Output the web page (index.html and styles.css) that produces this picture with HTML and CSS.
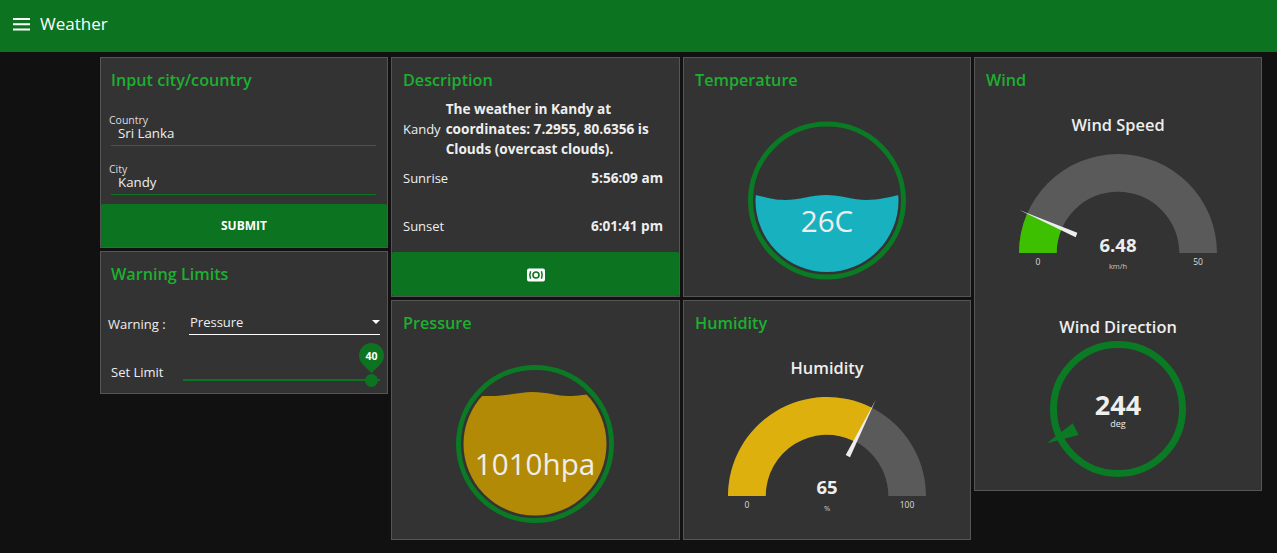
FILE: index.html
```html
<!DOCTYPE html>
<html lang="en">
<head>
    <meta charset="UTF-8">
    <meta name="viewport" content="width=device-width, initial-scale=1.0">
    <title>Weather</title>
    <link rel="stylesheet" href="styles.css">
</head>
<body>
    <header class="toolbar">
        <svg class="menu-icon" viewBox="0 0 18 14">
            <path d="M0 2h17M0 7.2h17M0 12.5h17" stroke="#fff" stroke-width="2" fill="none"/>
        </svg>
        <span class="toolbar-title">Weather</span>
    </header>

    <main class="board">
        <div class="column">
            <section class="card card-input">
                <h3 class="card-title">Input city/country</h3>
                <div class="field">
                    <label class="field-label">Country</label>
                    <div class="field-value">Sri Lanka</div>
                </div>
                <div class="field field-active">
                    <label class="field-label">City</label>
                    <div class="field-value">Kandy</div>
                </div>
                <button class="action-button">SUBMIT</button>
            </section>

            <section class="card card-limits">
                <h3 class="card-title">Warning Limits</h3>
                <div class="warning-row">
                    <span class="warning-label">Warning :</span>
                    <div class="select">
                        <span>Pressure</span>
                        <span class="select-caret"></span>
                    </div>
                </div>
                <div class="slider-row">
                    <span class="slider-label">Set Limit</span>
                    <div class="slider">
                        <div class="slider-pin"><span>40</span></div>
                        <div class="slider-thumb"></div>
                    </div>
                </div>
            </section>
        </div>

        <div class="column column-wide">
            <section class="card card-half">
                <h3 class="card-title">Description</h3>
                <div class="desc-row">
                    <span>Kandy</span>
                    <strong class="desc-text">The weather in Kandy at coordinates: 7.2955, 80.6356 is Clouds (overcast clouds).</strong>
                </div>
                <div class="time-row">
                    <span>Sunrise</span>
                    <strong>5:56:09 am</strong>
                </div>
                <div class="time-row time-row-last">
                    <span>Sunset</span>
                    <strong>6:01:41 pm</strong>
                </div>
                <button class="action-button action-icon">
                    <svg viewBox="0 0 18 14" width="18" height="14">
                        <rect x="0" y="0.5" width="18" height="13" rx="2" fill="#fff"/>
                        <circle cx="9" cy="7" r="3" fill="none" stroke="#0c7420" stroke-width="1.6"/>
                        <path d="M3.6 3.2Q2 7 3.6 10.8M14.4 3.2Q16 7 14.4 10.8" fill="none" stroke="#0c7420" stroke-width="1.5"/>
                    </svg>
                </button>
            </section>

            <section class="card card-half">
                <h3 class="card-title">Pressure</h3>
                <svg class="gauge" viewBox="0 0 286 194" height="194">
                    <clipPath id="pressure-clip"><circle cx="142.5" cy="99" r="71.5"/></clipPath>
                    <circle cx="142.5" cy="99" r="76.5" class="ring"/>
                    <path clip-path="url(#pressure-clip)" fill="#b38a05" d="M60 47C78 51 90 51 98 51C115 51 128 47 140 47C155 47 165 51 175 51C183 51 192 50 226 45V180H60Z"/>
                    <text x="142.5" y="130" class="level-text">1010hpa</text>
                </svg>
            </section>
        </div>

        <div class="column">
            <section class="card card-half">
                <h3 class="card-title">Temperature</h3>
                <svg class="gauge" viewBox="0 0 286 194" height="194">
                    <clipPath id="temp-clip"><circle cx="143" cy="98.5" r="71.5"/></clipPath>
                    <circle cx="143" cy="98.5" r="76.5" class="ring"/>
                    <path clip-path="url(#temp-clip)" fill="#17b1bf" d="M71 93C85 96 90 98 101 98C115 98 128 93 142 93C156 93 170 98 182 98C195 98 205 95 215 93V180H71Z"/>
                    <text x="143" y="130" class="level-text">26C</text>
                </svg>
            </section>

            <section class="card card-half">
                <h3 class="card-title">Humidity</h3>
                <svg class="gauge" viewBox="0 0 286 194" height="194">
                    <text x="143" y="28.5" class="gauge-title">Humidity</text>
                    <path class="arc-track" d="M44 151A99 99 0 0 1 242 151H204.3A61.3 61.3 0 0 0 81.7 151Z"/>
                    <path fill="#deb00d" d="M44 151A99 99 0 0 1 187.9 62.8L170.8 96.4A61.3 61.3 0 0 0 81.7 151Z"/>
                    <polygon class="needle" points="191.7,55 166,112.3 161.7,110"/>
                    <text x="143" y="149" class="gauge-value">65</text>
                    <text x="143" y="166" class="gauge-unit">%</text>
                    <text x="63" y="163" class="gauge-limit">0</text>
                    <text x="223" y="163" class="gauge-limit">100</text>
                </svg>
            </section>
        </div>

        <div class="column">
            <section class="card card-wind">
                <h3 class="card-title">Wind</h3>
                <svg class="gauge" viewBox="0 0 286 190" height="190">
                    <text x="143" y="28.5" class="gauge-title">Wind Speed</text>
                    <path class="arc-track" d="M44 151A99 99 0 0 1 242 151H204.3A61.3 61.3 0 0 0 81.7 151Z"/>
                    <path fill="#3dc000" d="M44 151A99 99 0 0 1 52.1 111.8L86.7 126.7A61.3 61.3 0 0 0 81.7 151Z"/>
                    <polygon class="needle" points="44.3,108 102.3,130.7 100.7,135.3"/>
                    <text x="143" y="150" class="gauge-value">6.48</text>
                    <text x="143" y="167" class="gauge-unit">km/h</text>
                    <text x="63" y="163" class="gauge-limit">0</text>
                    <text x="223" y="163" class="gauge-limit">50</text>
                </svg>
                <svg class="gauge" viewBox="0 0 286 198" height="198">
                    <text x="143" y="40.5" class="gauge-title">Wind Direction</text>
                    <circle cx="143" cy="117" r="64.5" class="ring ring-wide"/>
                    <polygon fill="#0a7a24" points="71.7,151.3 97.7,131.3 103.7,143"/>
                    <text x="143" y="123" class="compass-value">244</text>
                    <text x="143" y="135" class="compass-unit">deg</text>
                </svg>
            </section>
        </div>
    </main>
</body>
</html>
```

FILE: styles.css
```css
* {
    margin: 0;
    padding: 0;
    box-sizing: border-box;
}

body {
    font-family: 'Open Sans', 'Noto Sans', sans-serif;
    background: #111111;
    color: #eeeeee;
    font-size: 13px;
    height: 100vh;
    overflow: hidden;
}

/* Top bar */
.toolbar {
    height: 52px;
    background: #0c7420;
    display: flex;
    align-items: center;
    padding: 0 0 4px 13px;
    color: #ffffff;
}

.menu-icon {
    width: 18px;
    height: 14px;
    margin-right: 9px;
}

.toolbar-title {
    font-size: 17px;
    margin-top: -2px;
}

/* Dashboard columns */
.board {
    display: flex;
    gap: 3px;
    padding: 5px 0 0 100px;
}

.column {
    width: 288px;
    display: flex;
    flex-direction: column;
    gap: 3px;
}

.column-wide {
    width: 289px;
}

.card {
    background: #333333;
    border: 1px solid #555555;
    display: flex;
    flex-direction: column;
}

.card-input { height: 191px; }
.card-limits { height: 143px; }
.card-half { height: 240px; }
.card-wind { height: 434px; }

.card-title {
    height: 44px;
    padding: 11px 0 0 10px;
    color: #1bb02f;
    font-size: 16.2px;
    font-weight: 600;
    line-height: 22px;
}

.card-half .card-title,
.card-wind .card-title {
    padding-left: 11px;
}

/* Input form */
.field {
    margin: 11px 11px 0 10px;
    height: 33px;
    padding-top: 1px;
    border-bottom: 1px solid #2a6a32;
}

.field + .field {
    margin-top: 16px;
    border-bottom-color: #0c7420;
}

.field-label {
    display: block;
    margin-left: -2px;
    font-size: 10.5px;
    line-height: 12px;
    color: #dddddd;
}

.field-value {
    padding-left: 7px;
    font-size: 13.3px;
    line-height: 15px;
}

.action-button {
    margin: auto 0 0;
    height: 43px;
    width: 100%;
    border: none;
    border-radius: 2px;
    background: #0c7420;
    color: #ffffff;
    font-family: inherit;
    font-size: 12px;
    font-weight: 700;
}

.action-icon {
    height: 44px;
    padding-top: 2px;
    display: flex;
    align-items: center;
    justify-content: center;
}

/* Warning limits */
.warning-row {
    display: flex;
    align-items: center;
    margin: 16px 7px 0 7px;
}

.warning-label {
    width: 81px;
}

.select {
    flex: 1;
    height: 23px;
    display: flex;
    align-items: center;
    justify-content: space-between;
    padding: 0 0 3px 1px;
    border-bottom: 1px solid #ffffff;
}

.select-caret {
    border-left: 4px solid transparent;
    border-right: 4px solid transparent;
    border-top: 4px solid #ffffff;
}

.slider-row {
    display: flex;
    align-items: flex-end;
    margin: 31px 7px 0 10px;
    height: 20px;
}

.slider-label {
    width: 72px;
    line-height: 18px;
    margin-bottom: 5px;
}

.slider {
    position: relative;
    flex: 1;
    height: 2px;
    margin-bottom: 5px;
    background: #0c7420;
}

.slider-thumb {
    position: absolute;
    right: 2px;
    top: -5px;
    width: 13px;
    height: 13px;
    border-radius: 50%;
    background: #0c7420;
}

.slider-pin {
    position: absolute;
    right: -4px;
    top: -36px;
    width: 25px;
    height: 25px;
    border-radius: 50% 50% 50% 0;
    background: #0c7420;
    transform: rotate(-45deg);
    display: flex;
    align-items: center;
    justify-content: center;
}

.slider-pin span {
    transform: rotate(45deg);
    font-size: 10.5px;
    font-weight: 700;
    color: #ffffff;
}

/* Description */
.desc-row {
    display: flex;
    align-items: center;
    margin: -3px 11px 0;
    line-height: 20px;
}

.desc-text {
    width: 225px;
    margin-left: 5px;
    font-size: 13.6px;
}

.time-row {
    display: flex;
    justify-content: space-between;
    margin: 9px 16px 0 11px;
    line-height: 20px;
    height: 36px;
}

.time-row strong {
    font-size: 13.6px;
}

.time-row-last {
    margin-top: 12px;
}

/* Gauges */
.gauge {
    display: block;
    width: 100%;
}

.ring {
    fill: none;
    stroke: #0a7a24;
    stroke-width: 5;
}

.ring-wide {
    stroke-width: 7;
}

.arc-track {
    fill: #5a5a5a;
}

.needle {
    fill: #eeeeee;
}

.level-text {
    fill: #eeeeee;
    font-size: 29.6px;
    text-anchor: middle;
}

.gauge-title {
    fill: #eeeeee;
    font-size: 16.4px;
    font-weight: 600;
    text-anchor: middle;
}

.gauge-value {
    fill: #eeeeee;
    font-size: 18.5px;
    font-weight: 700;
    text-anchor: middle;
}

.gauge-unit {
    fill: #cccccc;
    font-size: 7.5px;
    text-anchor: middle;
}

.gauge-limit {
    fill: #dddddd;
    font-size: 8.5px;
    text-anchor: middle;
}

.compass-value {
    fill: #eeeeee;
    font-size: 27px;
    font-weight: 700;
    text-anchor: middle;
}

.compass-unit {
    fill: #eeeeee;
    font-size: 9px;
    text-anchor: middle;
}
```
